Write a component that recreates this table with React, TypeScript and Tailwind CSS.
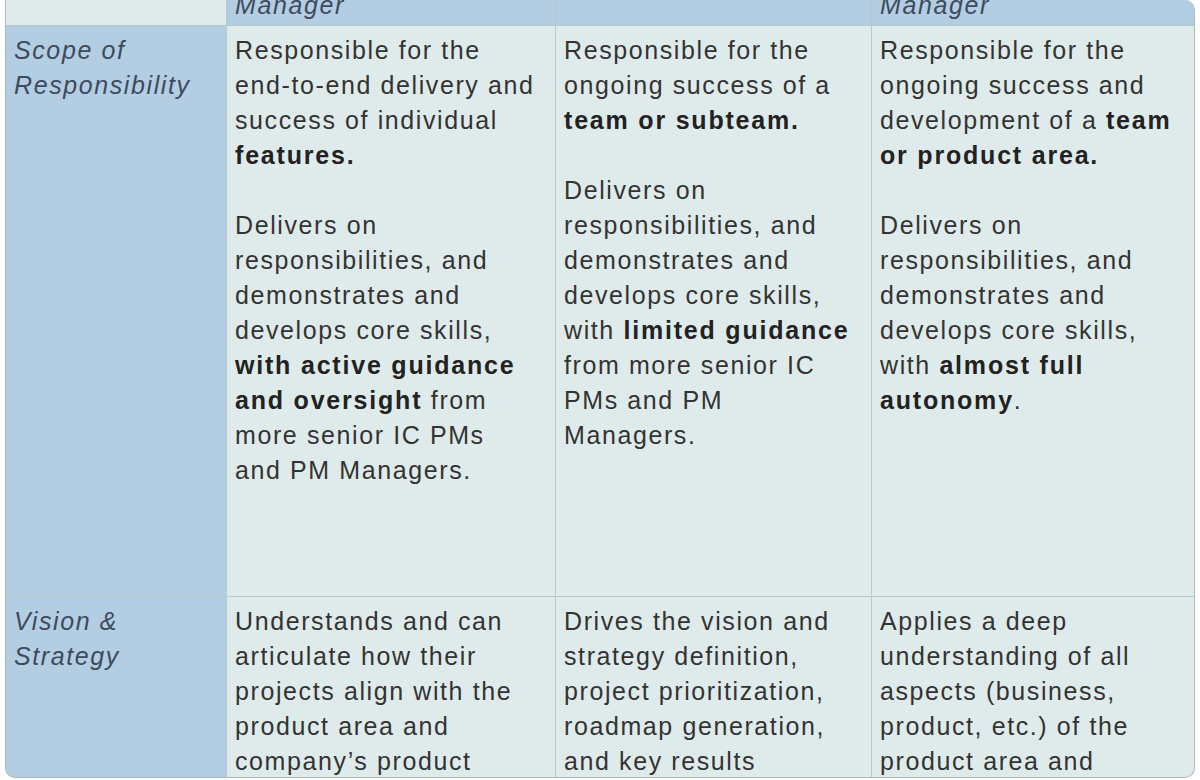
const HEAD = 'bg-[#b3cde3]';
const CELL = 'bg-[#dfebea]';

function Body({ children }: { children: React.ReactNode }) {
  return (
    <div className={`${CELL} px-[8px] pt-[7px] overflow-hidden`}>
      {children}
    </div>
  );
}

function B({ children }: { children: React.ReactNode }) {
  return <b className="text-[#222] tracking-[1.8px]">{children}</b>;
}

export default function App() {
  return (
    <div
      className="w-[1200px] h-[780px] bg-white overflow-hidden pl-[5px] text-[#333] text-[25px] leading-[35px] tracking-[1.6px]"
      style={{ fontFamily: '"Liberation Sans", Arial, sans-serif' }}
    >
      <div className="w-[1190px] h-[778px] border-l border-r border-b border-[#a7bbbd] rounded-tr-[10px] rounded-b-[10px] overflow-hidden bg-[#b6c9cb] grid grid-cols-[220px_328px_315px_322px] grid-rows-[25px_570px_1fr] gap-px">
        {/* header row, mostly scrolled off the top */}
        <div className={CELL} />
        <div className={`${HEAD} overflow-hidden px-[8px]`}>
          <div className="-mt-[47px] italic text-[#3d4b5c]">
            <div>Associate Product</div>
            <div>Manager</div>
          </div>
        </div>
        <div className={`${HEAD} overflow-hidden px-[8px]`}>
          <div className="-mt-[47px] italic text-[#3d4b5c]">
            <div>Product Manager</div>
          </div>
        </div>
        <div className={`${HEAD} overflow-hidden px-[8px]`}>
          <div className="-mt-[47px] italic text-[#3d4b5c]">
            <div>Senior Product</div>
            <div>Manager</div>
          </div>
        </div>

        {/* Scope of Responsibility */}
        <div className={`${HEAD} px-[8px] pt-[7px] italic text-[#3d4b5c]`}>
          Scope of Responsibility
        </div>
        <Body>
          <p>
            Responsible for the <span className="whitespace-nowrap">end-to-end</span> delivery and success of
            individual <B>features.</B>
          </p>
          <p className="mt-[35px]">
            Delivers on responsibilities, and demonstrates and develops core skills,{' '}
            <B>with active guidance and oversight</B> from more senior IC PMs
            <br />
            and PM Managers.
          </p>
        </Body>
        <Body>
          <p>
            Responsible for the ongoing success of a <B>team or subteam.</B>
          </p>
          <p className="mt-[35px]">
            Delivers on responsibilities, and demonstrates and develops core skills, with <B>limited guidance</B>{' '}
            from more senior IC PMs and PM Managers.
          </p>
        </Body>
        <Body>
          <p>
            Responsible for the ongoing success and development of a <B>team or product area.</B>
          </p>
          <p className="mt-[35px]">
            Delivers on responsibilities, and demonstrates and develops core skills, with <B>almost full autonomy</B>.
          </p>
        </Body>

        {/* Vision & Strategy */}
        <div className={`${HEAD} px-[8px] pt-[7px] italic text-[#3d4b5c]`}>Vision &amp; Strategy</div>
        <Body>
          <p>
            Understands and can articulate how their projects align with the product area and company’s product
            vision and strategy.
          </p>
        </Body>
        <Body>
          <p>
            Drives the vision and strategy definition, project prioritization, roadmap generation, and key results
            <br />
            for their team.
          </p>
        </Body>
        <Body>
          <p>
            Applies a deep understanding of all aspects (business, product, etc.) of the product area and
            company to shape strategy.
          </p>
        </Body>
      </div>
    </div>
  );
}
